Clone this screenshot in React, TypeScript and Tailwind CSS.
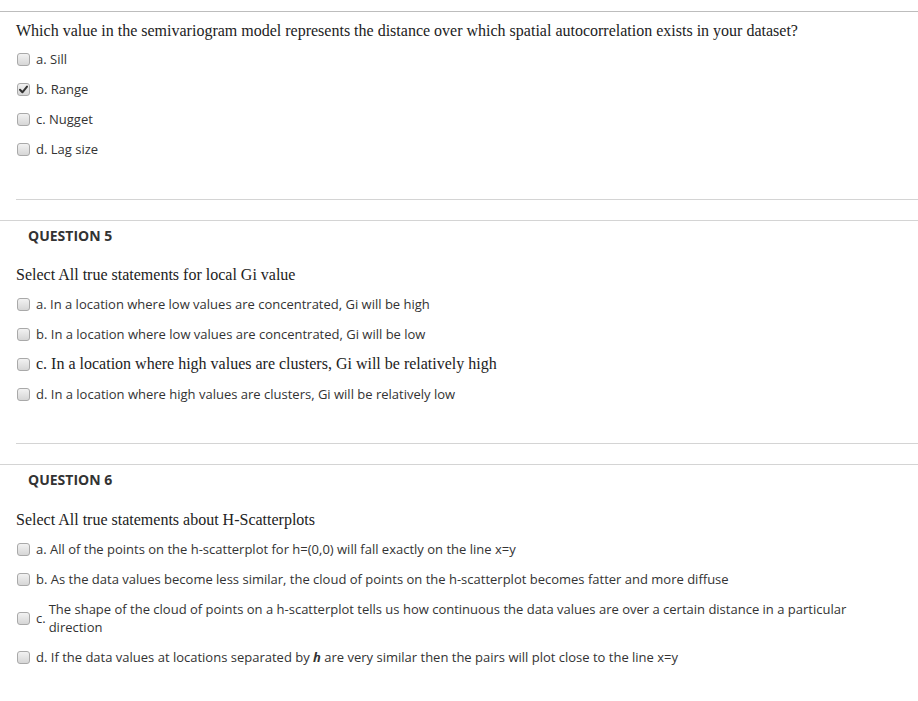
import React from "react";

const serif = "font-['Liberation_Serif','Times_New_Roman',serif]";
const sans = "font-['Open_Sans','Liberation_Sans',sans-serif]";

const Box = ({ checked }: { checked?: boolean }) => (
  <span className="relative inline-block w-[13px] h-[13px] shrink-0 rounded-[3px] border border-[#a9a9a9] bg-gradient-to-b from-[#f2f2f2] to-[#d6d6d6]">
    {checked && (
      <svg viewBox="0 0 13 13" className="absolute left-[-1px] top-[-1px] w-[13px] h-[13px]">
        <path d="M3 6.8 L5.4 9.3 L10 3.6" fill="none" stroke="#333" strokeWidth="2" strokeLinecap="round" strokeLinejoin="round" />
      </svg>
    )}
  </span>
);

type Opt = { label: React.ReactNode; checked?: boolean; serif?: boolean };

const Row = ({ opt }: { opt: Opt }) => (
  <div className="flex items-center gap-[6px] py-[6px] leading-[18px]">
    <Box checked={opt.checked} />
    <span className={opt.serif ? `${serif} text-[16px] text-[#222]` : `${sans} text-[13px] text-[#333]`}>
      {opt.label}
    </span>
  </div>
);

const Question = ({ text, options, gap = "mt-[4px]" }: { text: string; options: Opt[]; gap?: string }) => (
  <div className="pl-[17px]">
    <p className={`${serif} text-[16px] leading-[20px] text-[#222] -ml-[1px]`}>{text}</p>
    <div className={gap}>
      {options.map((o, i) => (
        <Row key={i} opt={o} />
      ))}
    </div>
  </div>
);

const Header = ({ n }: { n: number }) => (
  <div className="border-t border-[#d4d4d4] mt-[20px] pt-[5px]">
    <h2 className={`${sans} font-bold text-[14px] leading-[20px] text-[#333] pl-[28px]`}>QUESTION {n}</h2>
  </div>
);

const Divider = ({ space }: { space: string }) => <div className={`ml-[16px] border-t border-[#d4d4d4] ${space}`} />;

export default function App() {
  return (
    <div className="w-[918px] h-[701px] bg-white pt-[11px] overflow-hidden">
      <div className="border-t border-[#bdbdbd] pt-[9px]">
        <Question
          gap="mt-[3px]"
          text="Which value in the semivariogram model represents the distance over which spatial autocorrelation exists in your dataset?"
          options={[
            { label: "a. Sill" },
            { label: "b. Range", checked: true },
            { label: "c. Nugget" },
            { label: "d. Lag size" },
          ]}
        />
      </div>
      <Divider space="mt-[35px]" />

      <Header n={5} />
      <div className="mt-[19px]">
        <Question
          text="Select All true statements for local Gi value"
          options={[
            { label: "a. In a location where low values are concentrated, Gi will be high" },
            { label: "b. In a location where low values are concentrated, Gi will be low" },
            { label: "c. In a location where high values are clusters, Gi will be relatively high", serif: true },
            { label: "d. In a location where high values are clusters, Gi will be relatively low" },
          ]}
        />
      </div>
      <Divider space="mt-[34px]" />

      <Header n={6} />
      <div className="mt-[20px] pl-[17px]">
        <p className={`${serif} text-[16px] leading-[20px] text-[#222] -ml-[1px]`}>
          Select All true statements about H-Scatterplots
        </p>
        <div className="mt-[4px]">
          <Row opt={{ label: "a. All of the points on the h-scatterplot for h=(0,0) will fall exactly on the line x=y" }} />
          <Row opt={{ label: "b. As the data values become less similar, the cloud of points on the h-scatterplot becomes fatter and more diffuse" }} />
          <div className={`flex items-center gap-[6px] py-[6px] leading-[18px] ${sans} text-[13px] text-[#333]`}>
            <Box />
            <span>c.</span>
            <span className="w-[810px] ml-[-3px]">
              The shape of the cloud of points on a h-scatterplot tells us how continuous the data values are over a certain distance in a particular direction
            </span>
          </div>
          <Row
            opt={{
              label: (
                <>
                  d. If the data values at locations separated by <b className="italic">h</b> are very similar then the pairs will plot close to the line x=y
                </>
              ),
            }}
          />
        </div>
      </div>
    </div>
  );
}
